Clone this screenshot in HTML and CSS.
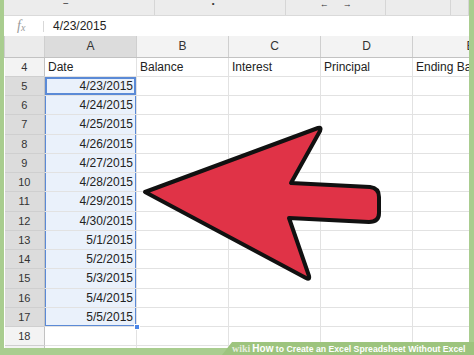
FILE: index.html
```html
<!DOCTYPE html>
<html lang="en">
  <head>
    <meta charset="UTF-8" />
    <meta name="viewport" content="width=device-width, initial-scale=1.0" />
    <title>Create an Excel Spreadsheet Without Excel</title>
    <link rel="stylesheet" href="styles.css">
  </head>
  <body>
    <div class="frame">
      <div class="sheet">
        <div class="toolbar">
          <span class="tb tb-1"><i class="ic">&minus;</i></span>
          <span class="tb tb-2"><i class="ic dot">&bull;</i></span>
          <span class="tb tb-3"><i class="ic">&larr;</i><i class="ic">&rarr;</i></span>
          <span class="tb tb-4"></span>
          <span class="tb tb-5"></span>
          <span class="tb tb-6"></span>
        </div>

        <div class="formula-bar">
          <span class="fx">f<sub>x</sub></span>
          <span class="fsep"></span>
          <span class="fval">4/23/2015</span>
        </div>

        <table class="grid">
          <colgroup>
            <col class="c-head" />
            <col class="c-a" />
            <col class="c-b" />
            <col class="c-c" />
            <col class="c-d" />
            <col class="c-e" />
          </colgroup>
          <thead>
            <tr>
              <th class="corner"></th>
              <th class="on">A</th>
              <th>B</th>
              <th>C</th>
              <th>D</th>
              <th>E</th>
            </tr>
          </thead>
          <tbody>
            <tr>
              <th>4</th>
              <td>Date</td>
              <td>Balance</td>
              <td>Interest</td>
              <td>Principal</td>
              <td>Ending Balance</td>
            </tr>
            <tr><th class="on">5</th><td class="num range active">4/23/2015</td><td></td><td></td><td></td><td></td></tr>
            <tr><th class="on">6</th><td class="num range">4/24/2015</td><td></td><td></td><td></td><td></td></tr>
            <tr><th class="on">7</th><td class="num range">4/25/2015</td><td></td><td></td><td></td><td></td></tr>
            <tr><th class="on">8</th><td class="num range">4/26/2015</td><td></td><td></td><td></td><td></td></tr>
            <tr><th class="on">9</th><td class="num range">4/27/2015</td><td></td><td></td><td></td><td></td></tr>
            <tr><th class="on">10</th><td class="num range">4/28/2015</td><td></td><td></td><td></td><td></td></tr>
            <tr><th class="on">11</th><td class="num range">4/29/2015</td><td></td><td></td><td></td><td></td></tr>
            <tr><th class="on">12</th><td class="num range">4/30/2015</td><td></td><td></td><td></td><td></td></tr>
            <tr><th class="on">13</th><td class="num range">5/1/2015</td><td></td><td></td><td></td><td></td></tr>
            <tr><th class="on">14</th><td class="num range">5/2/2015</td><td></td><td></td><td></td><td></td></tr>
            <tr><th class="on">15</th><td class="num range">5/3/2015</td><td></td><td></td><td></td><td></td></tr>
            <tr><th class="on">16</th><td class="num range">5/4/2015</td><td></td><td></td><td></td><td></td></tr>
            <tr><th class="on">17</th><td class="num range last">5/5/2015<span class="handle"></span></td><td></td><td></td><td></td><td></td></tr>
            <tr><th>18</th><td></td><td></td><td></td><td></td><td></td></tr>
            <tr><th>19</th><td></td><td></td><td></td><td></td><td></td></tr>
          </tbody>
        </table>
      </div>

      <svg class="arrow" width="474" height="355" viewBox="0 0 474 355">
        <path d="M145 192 L318 128 Q322 127 320 131 L291 183 L370 187 Q379 188 379 197 L379 213 Q379 222 369 222 L289 218 L309 276 Q310 280 306 278 Z"
              fill="#e03347" stroke="#111" stroke-width="4" stroke-linejoin="round" />
      </svg>

      <div class="credit">
        <span class="wiki">wiki</span><span class="how">How</span> to Create an Excel Spreadsheet Without Excel
      </div>
    </div>
  </body>
</html>
```

FILE: styles.css
```css
*,
*::before,
*::after {
  box-sizing: border-box;
}

body {
  margin: 0;
  background: #a9cd8f;
  font-family: 'Liberation Sans', Arial, sans-serif;
}

.frame {
  position: relative;
  width: 474px;
  height: 355px;
  padding: 0 5px 7px 4px;
  overflow: hidden;
}

.sheet {
  width: 465px;
  height: 348px;
  background: #fff;
  overflow: hidden;
}

/* toolbar strip, cut off at the top */
.toolbar {
  display: flex;
  height: 16px;
  background: #ececec;
  border-bottom: 1px solid #dadada;
}
.tb {
  display: flex;
  align-items: flex-start;
  justify-content: center;
  gap: 14px;
  height: 100%;
  border-right: 1px solid #d6d6d6;
}
.tb-1 { width: 151px; }
.tb-2 { width: 132px; }
.tb-3 { width: 100px; }
.tb-4 { width: 65px; }
.tb-5 { width: 17px; border-right: none; }
.ic {
  font-style: normal;
  font-size: 10px;
  line-height: 8px;
  color: #333;
}
.tb-1 .ic { margin-left: -26px; }
.tb-2 .ic { margin-left: -14px; font-size: 8px; }
.tb-3 .ic { font-size: 9px; }

.formula-bar {
  display: flex;
  align-items: center;
  height: 20px;
  background: #fff;
}
.fx {
  width: 39px;
  padding-left: 13px;
  font-family: 'Liberation Serif', serif;
  font-style: italic;
  font-size: 14px;
  color: #9a9a9a;
}
.fx sub {
  font-size: 10px;
  vertical-align: -1px;
}
.fsep {
  width: 1px;
  height: 11px;
  background: #d8d8d8;
}
.fval {
  padding-left: 9px;
  font-size: 12px;
  color: #222;
}

/* grid */
.grid {
  table-layout: fixed;
  border-collapse: collapse;
  width: 524px;
  font-size: 12px;
  color: #222;
}
.c-head { width: 40px; }
.c-a { width: 92px; }
.c-b { width: 92px; }
.c-c { width: 92px; }
.c-d { width: 92px; }
.c-e { width: 116px; }

.grid thead tr { height: 21px; }
.grid tbody tr { height: 19.25px; }

.grid th {
  padding: 0;
  font-weight: normal;
  font-size: 11px;
  color: #333;
  background: #f3f3f3;
  border: 1px solid #cfcfcf;
  text-align: center;
}
.grid thead th {
  font-size: 12px;
  border-bottom-color: #c2c2c2;
  border-top: none;
}
.grid tbody th {
  border-left: none;
  border-right-color: #c2c2c2;
}
.grid th.corner { background: #ebebeb; }
.grid th.on { background: #dcdcdc; }

.grid td {
  padding: 0 3px;
  white-space: nowrap;
  overflow: hidden;
  border: 1px solid #e2e2e2;
}
.grid td.num { text-align: right; }

.grid td.range {
  position: relative;
  overflow: visible;
  background: #eaf1fb;
  box-shadow: inset 1px 0 #5b8ad6, inset -1px 0 #5b8ad6;
}
.grid td.active { box-shadow: inset 0 0 0 2px #5b8ad6; }
.grid td.last { box-shadow: inset 1px 0 #5b8ad6, inset -1px 0 #5b8ad6, inset 0 -1px #5b8ad6; }

.handle {
  position: absolute;
  right: -4px;
  bottom: -4px;
  width: 6px;
  height: 6px;
  background: #4a86e8;
  border: 1px solid #fff;
}

.arrow {
  position: absolute;
  top: 0;
  left: 0;
  pointer-events: none;
}

/* watermark tab */
.credit {
  position: absolute;
  right: 0;
  bottom: 0;
  width: 252px;
  height: 13px;
  padding-left: 10px;
  background: #9dc47e;
  clip-path: polygon(10px 0, 100% 0, 100% 100%, 0 100%);
  font-size: 8.7px;
  font-weight: bold;
  line-height: 13px;
  color: #fff;
  white-space: nowrap;
}
.wiki {
  font-family: 'Liberation Serif', serif;
  font-size: 10px;
  color: #e4ecdc;
}
.how {
  margin-left: 2px;
  font-size: 10px;
}
```
